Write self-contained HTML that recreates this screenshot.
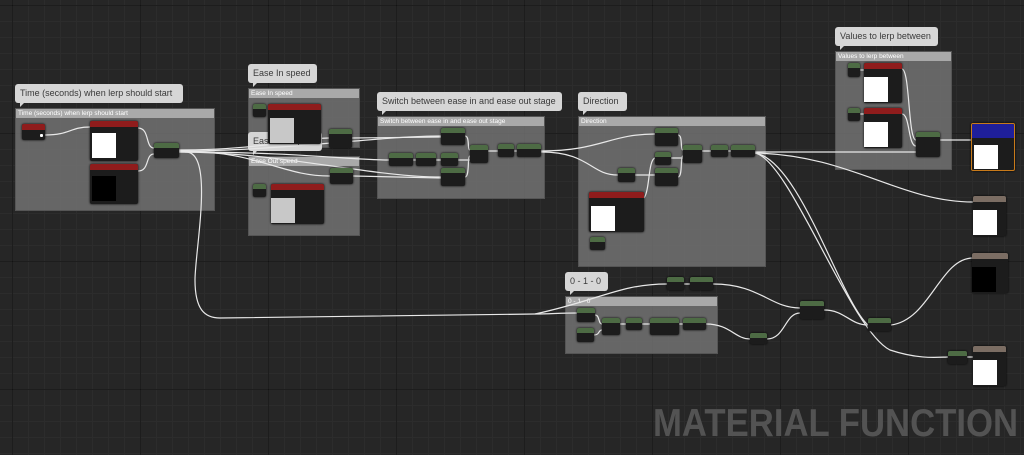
<!DOCTYPE html>
<html><head><meta charset="utf-8">
<style>
*{margin:0;padding:0;box-sizing:border-box}
body{width:1024px;height:455px;overflow:hidden;position:relative;font-family:"Liberation Sans",sans-serif;
background-color:#262626;
background-image:
linear-gradient(90deg,rgba(0,0,0,.35) 1px,transparent 1px),
linear-gradient(0deg,rgba(0,0,0,.35) 1px,transparent 1px),
linear-gradient(90deg,#2c2c2c 1px,transparent 1px),
linear-gradient(0deg,#2c2c2c 1px,transparent 1px);
background-size:128px 128px,128px 128px,16px 16px,16px 16px;
background-position:12px 6px,12px 6px,12px 6px,12px 6px;}
.c{position:absolute;background:rgba(120,120,120,.78);border:1px solid #555}
.c .h{height:9px;background:#a9a9a9;color:#fff;font-size:6.5px;line-height:9px;padding-left:2px;white-space:nowrap;overflow:hidden}
.b{position:absolute;background:#d6d6d6;border-radius:3px;color:#3a3a3a;font-size:9px;line-height:19px;padding:0 5px;white-space:nowrap;height:19px;overflow:visible}
.b:after{content:"";position:absolute;left:5px;bottom:-4px;border:3px solid transparent;border-top:3px solid #d6d6d6;border-left:3px solid #d6d6d6}
.n{position:absolute;background:#1c1c1c;border-radius:2px;box-shadow:0 0 2px #000}
.n .t{height:5px;background:#4d6b44;border-radius:2px 2px 0 0}
.n.r .t{background:#8f1c1c;height:6px}
.n.o .t{background:#7b6d63;height:6px}
.n.bl .t{background:#1f1f9a;height:14px}
.n .p{position:absolute;background:#fff}
.n .pin{position:absolute;width:3px;height:3px;background:#fff;border-radius:1px}
svg{position:absolute;left:0;top:0}
.wm{position:absolute;left:653px;top:400px;font-weight:bold;font-size:39px;color:#535353;line-height:48px;white-space:nowrap;transform:scaleX(.89);transform-origin:left}
</style></head><body>

<div class="b" style="left:15px;top:84px;width:168px">Time (seconds) when lerp should start</div>
<div class="c" style="left:15px;top:108px;width:200px;height:103px"><div class="h">Time (seconds) when lerp should start</div></div>
<div class="b" style="left:248px;top:64px;width:69px">Ease In speed</div>
<div class="c" style="left:248px;top:88px;width:112px;height:60px"><div class="h">Ease In speed</div></div>
<div class="b" style="left:248px;top:132px;width:74px">Ease Out speed</div>
<div class="c" style="left:248px;top:156px;width:112px;height:80px"><div class="h">Ease Out speed</div></div>
<div class="b" style="left:377px;top:92px;width:185px">Switch between ease in and ease out stage</div>
<div class="c" style="left:377px;top:116px;width:168px;height:83px"><div class="h">Switch between ease in and ease out stage</div></div>
<div class="b" style="left:578px;top:92px;width:49px">Direction</div>
<div class="c" style="left:578px;top:116px;width:188px;height:151px"><div class="h">Direction</div></div>
<div class="b" style="left:835px;top:27px;width:103px">Values to lerp between</div>
<div class="c" style="left:835px;top:51px;width:117px;height:119px"><div class="h">Values to lerp between</div></div>
<div class="b" style="left:565px;top:272px;width:43px">0 - 1 - 0</div>
<div class="c" style="left:565px;top:296px;width:153px;height:58px"><div class="h">0 - 1 - 0</div></div>

<svg width="1024" height="455" fill="none" stroke="#e8e8e8" stroke-width="1.2">
<path d="M45 135C70 135 70 127 90 127"/>
<path d="M138 128C150 128 145 148 154 148"/>
<path d="M138 171C150 171 145 154 154 154"/>
<path d="M179 150C260 150 300 138 329 138"/>
<path d="M179 151C260 151 280 176 330 176"/>
<path d="M179 151C280 151 380 136 441 136"/>
<path d="M179 152C280 152 370 177 441 177"/>
<path d="M179 152C300 152 350 160 389 160"/>
<path d="M185 152C215 150 195 250 195 280C195 310 205 318 220 318L535 314C550 314 560 313 577 313"/>
<path d="M535 314C600 300 620 284 667 284"/>
<path d="M352 138L441 137"/><path d="M353 176L441 178"/>
<path d="M413 160H416M436 160H441"/>
<path d="M465 136C470 136 467 150 470 150M465 177C470 177 467 156 470 156M458 160H470"/>
<path d="M488 151H498M514 151H517"/>
<path d="M541 151C600 151 610 134 655 134"/>
<path d="M541 152C590 152 590 175 618 175"/>
<path d="M635 175H655M644 198C650 190 648 160 655 158"/>
<path d="M678 135C683 135 680 150 683 150M678 177C683 177 680 156 683 156M671 158H683M702 151H711M728 151H731"/>
<path d="M755 152L916 152"/>
<path d="M755 153C850 155 900 202 973 202"/>
<path d="M755 153C800 160 840 300 868 325"/>
<path d="M755 153C790 160 850 330 890 350C920 360 940 357 948 357"/>
<path d="M902 69C910 70 908 140 916 140M902 114C910 114 908 146 916 146"/>
<path d="M860 70H864M860 114H864"/>
<path d="M940 140H971"/>
<path d="M595 315C600 315 598 324 602 324M594 335C600 335 598 330 602 330M620 324H626M642 324H650M679 324H683"/>
<path d="M706 324C730 324 735 339 750 339"/>
<path d="M767 339C785 339 785 313 800 313"/>
<path d="M713 284C760 284 770 308 800 308"/>
<path d="M824 310C845 310 850 325 868 325"/>
<path d="M891 325C930 320 940 258 973 258"/>
<path d="M967 357H973"/>
<path d="M684 284H690"/>
</svg>

<div class="n r" style="left:22px;top:124px;width:23px;height:16px"><div class="t"></div><div class="pin" style="right:2px;top:10px"></div></div>
<div class="n r" style="left:90px;top:121px;width:48px;height:40px"><div class="t"></div><div class="p" style="left:2px;top:12px;width:24px;height:25px"></div></div>
<div class="n r" style="left:90px;top:164px;width:48px;height:40px"><div class="t"></div><div class="p" style="left:2px;top:12px;width:24px;height:25px;background:#000"></div></div>
<div class="n" style="left:154px;top:143px;width:25px;height:15px"><div class="t"></div></div>
<div class="n" style="left:253px;top:104px;width:13px;height:13px"><div class="t"></div></div>
<div class="n r" style="left:268px;top:104px;width:53px;height:40px"><div class="t"></div><div class="p" style="left:2px;top:14px;width:24px;height:25px;background:#c8c8c8"></div></div>
<div class="n" style="left:329px;top:129px;width:23px;height:19px"><div class="t"></div></div>
<div class="n" style="left:253px;top:184px;width:13px;height:13px"><div class="t"></div></div>
<div class="n r" style="left:271px;top:184px;width:53px;height:40px"><div class="t"></div><div class="p" style="left:0;top:14px;width:24px;height:25px;background:#c8c8c8"></div></div>
<div class="n" style="left:330px;top:168px;width:23px;height:16px"><div class="t"></div></div>
<div class="n" style="left:389px;top:153px;width:24px;height:13px"><div class="t"></div></div>
<div class="n" style="left:416px;top:153px;width:20px;height:13px"><div class="t"></div></div>
<div class="n" style="left:441px;top:128px;width:24px;height:17px"><div class="t"></div></div>
<div class="n" style="left:441px;top:153px;width:17px;height:13px"><div class="t"></div></div>
<div class="n" style="left:441px;top:168px;width:24px;height:18px"><div class="t"></div></div>
<div class="n" style="left:470px;top:145px;width:18px;height:18px"><div class="t"></div></div>
<div class="n" style="left:498px;top:144px;width:16px;height:13px"><div class="t"></div></div>
<div class="n" style="left:517px;top:144px;width:24px;height:13px"><div class="t"></div></div>
<div class="n" style="left:655px;top:128px;width:23px;height:18px"><div class="t"></div></div>
<div class="n" style="left:655px;top:152px;width:16px;height:13px"><div class="t"></div></div>
<div class="n" style="left:655px;top:168px;width:23px;height:18px"><div class="t"></div></div>
<div class="n" style="left:618px;top:168px;width:17px;height:14px"><div class="t"></div></div>
<div class="n" style="left:683px;top:145px;width:19px;height:18px"><div class="t"></div></div>
<div class="n" style="left:711px;top:145px;width:17px;height:12px"><div class="t"></div></div>
<div class="n" style="left:731px;top:145px;width:24px;height:12px"><div class="t"></div></div>
<div class="n r" style="left:589px;top:192px;width:55px;height:40px"><div class="t"></div><div class="p" style="left:2px;top:14px;width:24px;height:25px"></div></div>
<div class="n" style="left:590px;top:237px;width:15px;height:13px"><div class="t"></div></div>
<div class="n" style="left:848px;top:63px;width:12px;height:14px"><div class="t"></div></div>
<div class="n r" style="left:864px;top:63px;width:38px;height:40px"><div class="t"></div><div class="p" style="left:0;top:14px;width:24px;height:25px"></div></div>
<div class="n" style="left:848px;top:108px;width:12px;height:13px"><div class="t"></div></div>
<div class="n r" style="left:864px;top:108px;width:38px;height:40px"><div class="t"></div><div class="p" style="left:0;top:14px;width:24px;height:25px"></div></div>
<div class="n" style="left:916px;top:132px;width:24px;height:25px"><div class="t"></div></div>
<div class="n bl" style="left:971px;top:123px;width:44px;height:48px;border:1px solid #c87a1a"><div class="t"></div><div class="p" style="left:2px;top:21px;width:24px;height:24px"></div></div>
<div class="n o" style="left:973px;top:196px;width:33px;height:40px"><div class="t"></div><div class="p" style="left:0;top:14px;width:24px;height:25px"></div></div>
<div class="n o" style="left:972px;top:253px;width:36px;height:40px"><div class="t"></div><div class="p" style="left:0;top:14px;width:24px;height:25px;background:#000"></div></div>
<div class="n o" style="left:973px;top:346px;width:33px;height:40px"><div class="t"></div><div class="p" style="left:0;top:14px;width:24px;height:25px"></div></div>
<div class="n" style="left:948px;top:351px;width:19px;height:13px"><div class="t"></div></div>
<div class="n" style="left:667px;top:277px;width:17px;height:13px"><div class="t"></div></div>
<div class="n" style="left:690px;top:277px;width:23px;height:13px"><div class="t"></div></div>
<div class="n" style="left:577px;top:308px;width:18px;height:14px"><div class="t"></div></div>
<div class="n" style="left:577px;top:328px;width:17px;height:14px"><div class="t"></div></div>
<div class="n" style="left:602px;top:318px;width:18px;height:17px"><div class="t"></div></div>
<div class="n" style="left:626px;top:318px;width:16px;height:12px"><div class="t"></div></div>
<div class="n" style="left:650px;top:318px;width:29px;height:17px"><div class="t"></div></div>
<div class="n" style="left:683px;top:318px;width:23px;height:12px"><div class="t"></div></div>
<div class="n" style="left:750px;top:333px;width:17px;height:11px"><div class="t"></div></div>
<div class="n" style="left:800px;top:301px;width:24px;height:18px"><div class="t"></div></div>
<div class="n" style="left:868px;top:318px;width:23px;height:13px"><div class="t"></div></div>

<div class="wm">MATERIAL FUNCTION</div>
</body></html>
